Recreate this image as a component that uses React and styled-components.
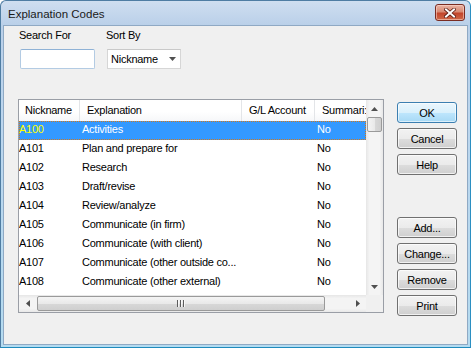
import React from 'react';
import styled, { createGlobalStyle } from 'styled-components';

const GlobalStyle = createGlobalStyle`
  html, body { margin: 0; padding: 0; background: #ffffff; }
  body {
    font-family: "Liberation Sans", Arial, sans-serif;
    font-size: 11px;
    letter-spacing: -0.25px;
    color: #000;
  }
`;

const Window = styled.div`
  width: 471px;
  height: 348px;
  box-sizing: border-box;
  display: flex;
  flex-direction: column;
  border: 1px solid #4f7da3;
  border-right-color: #2b8fc2;
  border-bottom-color: #1f8bbd;
  border-radius: 6px 6px 0 0;
  padding: 0 2px 2px;
  background: linear-gradient(180deg, #cfdef0 0px, #bad0e9 24px, #bcd6ee 120px, #b4dbf0 100%);
`;

const TitleBar = styled.div`
  height: 24px;
  flex: none;
  display: flex;
  align-items: flex-start;
  justify-content: space-between;
  padding-left: 5px;
`;

const Title = styled.span`
  font-size: 11.5px;
  letter-spacing: 0;
  line-height: 24px;
  padding-top: 1px;
  color: #1a1a1a;
`;

const CloseButton = styled.div`
  width: 30px;
  height: 17px;
  margin: 3px 3px 0 0;
  box-sizing: border-box;
  border: 1px solid #7a2c22;
  border-radius: 3px;
  background: linear-gradient(180deg, #eab3a5 0%, #d88a73 45%, #c2452b 55%, #cf6848 100%);
  box-shadow: inset 0 0 0 1px rgba(255, 220, 210, 0.55);
  display: flex;
  align-items: center;
  justify-content: center;
`;

const Body = styled.div`
  flex: 1;
  display: flex;
  align-items: flex-start;
  background: #f0f0f0;
  border: 1px solid #8fa9c4;
  padding: 3px 10px 0 14px;
`;

const Main = styled.div`
  width: 366px;
  display: flex;
  flex-direction: column;
`;

const Filters = styled.div`
  display: flex;
  gap: 11px;
`;

const Field = styled.div`
  display: flex;
  flex-direction: column;
`;

const Label = styled.label`
  line-height: 13px;
  margin-bottom: 7px;
  padding-left: ${({ $indent }) => $indent || 0}px;
`;

const SearchInput = styled.div`
  width: 75px;
  height: 20px;
  margin-left: 2px;
  box-sizing: border-box;
  background: #fff;
  border: 1px solid #b3cbe3;
  border-top-color: #8fb2d6;
  border-radius: 2px;
`;

const Select = styled.div`
  width: 74px;
  height: 20px;
  margin-left: 1px;
  box-sizing: border-box;
  background: #fff;
  border: 1px solid #d6d6d6;
  border-top-color: #c9c9c9;
  display: flex;
  align-items: center;
  justify-content: space-between;
  padding: 0 4px 0 3px;
`;

const ListBox = styled.div`
  margin-top: 30px;
  width: 366px;
  height: 214px;
  box-sizing: border-box;
  border: 1px solid #9a9ea6;
  background: #fff;
  display: grid;
  grid-template-columns: 347px 17px;
  grid-template-rows: 195px 17px;
`;

const Content = styled.div`
  overflow: hidden;
`;

const columns = '61px 162px 73px 90px';

const HeaderRow = styled.div`
  display: grid;
  grid-template-columns: ${columns};
  height: 21px;
  background: linear-gradient(180deg, #ffffff 0%, #ffffff 55%, #f6f7f9 100%);
`;

const HeaderCell = styled.div`
  line-height: 21px;
  padding-left: 7px;
  white-space: nowrap;
  overflow: hidden;
  border-right: 1px solid #e3e5e8;
  &:first-child { padding-left: 6px; }
`;

const Row = styled.div`
  display: grid;
  grid-template-columns: ${columns};
  height: 19px;
  box-sizing: border-box;
  background: ${({ $selected }) => ($selected ? '#3399ff' : 'transparent')};
  color: ${({ $selected }) => ($selected ? '#ffffff' : '#000000')};
  outline: ${({ $selected }) => ($selected ? '1px dotted #d2781a' : 'none')};
  outline-offset: -1px;
`;

const Cell = styled.div`
  line-height: 17px;
  padding-left: 2px;
  white-space: nowrap;
  overflow: hidden;
  &:first-child {
    padding-left: 0;
    color: ${({ $highlight }) => ($highlight ? '#ffff00' : 'inherit')};
  }
`;

const VScroll = styled.div`
  display: flex;
  flex-direction: column;
  background: linear-gradient(90deg, #e6e6e6 0%, #f4f4f4 20%, #f4f4f4 80%, #e8e8e8 100%);
`;

const HScroll = styled.div`
  display: flex;
  align-items: stretch;
  background: linear-gradient(180deg, #e6e6e6 0%, #f4f4f4 20%, #f4f4f4 80%, #e8e8e8 100%);
`;

const ArrowBox = styled.div`
  flex: none;
  width: 17px;
  height: 17px;
  display: flex;
  align-items: center;
  justify-content: center;
`;

const Track = styled.div`
  flex: 1;
`;

const Thumb = styled.div`
  box-sizing: border-box;
  border: 1px solid #9a9a9a;
  border-radius: 2px;
  display: flex;
  align-items: center;
  justify-content: center;
  ${({ $vertical }) =>
    $vertical
      ? `height: 15px; margin: 0 1px;
         background: linear-gradient(90deg, #f4f4f4 0%, #e9e9e9 50%, #d8d8d8 51%, #cfcfcf 100%);`
      : `width: 288px; margin: 1px 0 1px 1px;
         background: linear-gradient(180deg, #f4f4f4 0%, #e9e9e9 50%, #d8d8d8 51%, #cfcfcf 100%);`}
`;

const Corner = styled.div`
  background: #f0f0f0;
`;

const ButtonColumn = styled.div`
  margin: 73px 0 0 13px;
  height: 214px;
  display: flex;
  flex-direction: column;
  justify-content: space-between;
`;

const ButtonGroup = styled.div`
  display: flex;
  flex-direction: column;
  gap: 5px;
`;

const Button = styled.div`
  width: 60px;
  height: 21px;
  box-sizing: border-box;
  border: 1px solid ${({ $primary }) => ($primary ? '#3c7fb1' : '#707070')};
  border-radius: 3px;
  display: flex;
  align-items: center;
  justify-content: center;
  background: ${({ $primary }) =>
    $primary
      ? 'linear-gradient(180deg, #eaf6fd 0%, #d9f0fc 50%, #bee6fd 51%, #a7d9f5 100%)'
      : 'linear-gradient(180deg, #f2f2f2 0%, #ebebeb 50%, #dddddd 51%, #cfcfcf 100%)'};
  box-shadow: inset 0 0 0 1px ${({ $primary }) => ($primary ? 'rgba(255,255,255,0.6)' : 'rgba(255,255,255,0.7)')};
`;

const Arrow = ({ dir }) => {
  const paths = {
    up: 'M0 4 L3.5 0 L7 4 Z',
    down: 'M0 0 L7 0 L3.5 4 Z',
    left: 'M4 0 L0 3.5 L4 7 Z',
    right: 'M0 0 L4 3.5 L0 7 Z',
  };
  const vertical = dir === 'up' || dir === 'down';
  return (
    <svg width={vertical ? 7 : 4} height={vertical ? 4 : 7} viewBox={vertical ? '0 0 7 4' : '0 0 4 7'}>
      <path d={paths[dir]} fill="#505050" />
    </svg>
  );
};

const Grip = () => (
  <svg width="8" height="7" viewBox="0 0 8 7">
    {[0, 3, 6].map((x) => (
      <g key={x}>
        <rect x={x} y="0" width="1" height="7" fill="#5c5c5c" />
        <rect x={x + 1} y="0" width="1" height="7" fill="#ffffff" opacity="0.7" />
      </g>
    ))}
  </svg>
);

const rows = [
  ['A100', 'Activities', '', 'No'],
  ['A101', 'Plan and prepare for', '', 'No'],
  ['A102', 'Research', '', 'No'],
  ['A103', 'Draft/revise', '', 'No'],
  ['A104', 'Review/analyze', '', 'No'],
  ['A105', 'Communicate (in firm)', '', 'No'],
  ['A106', 'Communicate (with client)', '', 'No'],
  ['A107', 'Communicate (other outside co...', '', 'No'],
  ['A108', 'Communicate (other external)', '', 'No'],
  ['A109', 'Appear for/attend', '', 'No'],
];

export default function App() {
  return (
    <>
      <GlobalStyle />
      <Window>
        <TitleBar>
          <Title>Explanation Codes</Title>
          <CloseButton>
            <svg width="12" height="10" viewBox="0 0 12 10">
              <path d="M2 1.5 L10 8.5 M10 1.5 L2 8.5" stroke="#5a1a12" strokeWidth="3.6" strokeLinecap="square" />
              <path d="M2 1.5 L10 8.5 M10 1.5 L2 8.5" stroke="#ffffff" strokeWidth="2" strokeLinecap="square" />
            </svg>
          </CloseButton>
        </TitleBar>
        <Body>
          <Main>
            <Filters>
              <Field>
                <Label $indent={1}>Search For</Label>
                <SearchInput />
              </Field>
              <Field>
                <Label>Sort By</Label>
                <Select>
                  <span>Nickname</span>
                  <Arrow dir="down" />
                </Select>
              </Field>
            </Filters>
            <ListBox>
              <Content>
                <HeaderRow>
                  <HeaderCell>Nickname</HeaderCell>
                  <HeaderCell>Explanation</HeaderCell>
                  <HeaderCell>G/L Account</HeaderCell>
                  <HeaderCell>Summari:</HeaderCell>
                </HeaderRow>
                {rows.map((r, i) => (
                  <Row key={r[0]} $selected={i === 0}>
                    {r.map((c, j) => (
                      <Cell key={j} $highlight={i === 0}>{c}</Cell>
                    ))}
                  </Row>
                ))}
              </Content>
              <VScroll>
                <ArrowBox><Arrow dir="up" /></ArrowBox>
                <Thumb $vertical />
                <Track />
                <ArrowBox><Arrow dir="down" /></ArrowBox>
              </VScroll>
              <HScroll>
                <ArrowBox><Arrow dir="left" /></ArrowBox>
                <Thumb><Grip /></Thumb>
                <Track />
                <ArrowBox><Arrow dir="right" /></ArrowBox>
              </HScroll>
              <Corner />
            </ListBox>
          </Main>
          <ButtonColumn>
            <ButtonGroup>
              <Button $primary>OK</Button>
              <Button>Cancel</Button>
              <Button>Help</Button>
            </ButtonGroup>
            <ButtonGroup>
              <Button>Add...</Button>
              <Button>Change...</Button>
              <Button>Remove</Button>
              <Button>Print</Button>
            </ButtonGroup>
          </ButtonColumn>
        </Body>
      </Window>
    </>
  );
}
